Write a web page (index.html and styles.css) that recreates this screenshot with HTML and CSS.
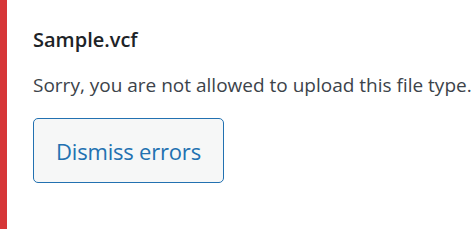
FILE: index.html
```html
<!DOCTYPE html>
<html>
<head>
<meta charset="utf-8">
<link rel="stylesheet" href="styles.css">
</head>
<body>
<div class="notice">
  <div class="content">
    <div class="filename">Sample.vcf</div>
    <p class="message">Sorry, you are not allowed to upload this file type.</p>
    <button class="dismiss" type="button">Dismiss errors</button>
  </div>
</div>
</body>
</html>
```
FILE: styles.css
```css
html, body {
  margin: 0;
  padding: 0;
  background: #fff;
}
.notice {
  height: 229px;
  border-left: 7px solid #d63638;
  box-sizing: border-box;
  font-family: "Open Sans", "Noto Sans", sans-serif;
  color: #3c434a;
}
.content {
  padding: 26px 0 0 26px;
}
.filename {
  font-size: 20px;
  font-weight: 600;
  color: #1d2327;
  line-height: 28px;
}
.message {
  margin: 17px 0 0;
  font-size: 19px;
  line-height: 28px;
  white-space: nowrap;
}
.dismiss {
  margin-top: 19px;
  width: 191px;
  height: 65px;
  border: 1.5px solid #2271b1;
  border-radius: 5px;
  background: #f6f7f7;
  color: #2271b1;
  font-family: "Open Sans", "Noto Sans", sans-serif;
  font-size: 22px;
  letter-spacing: -0.2px;
  padding: 0;
}
```
